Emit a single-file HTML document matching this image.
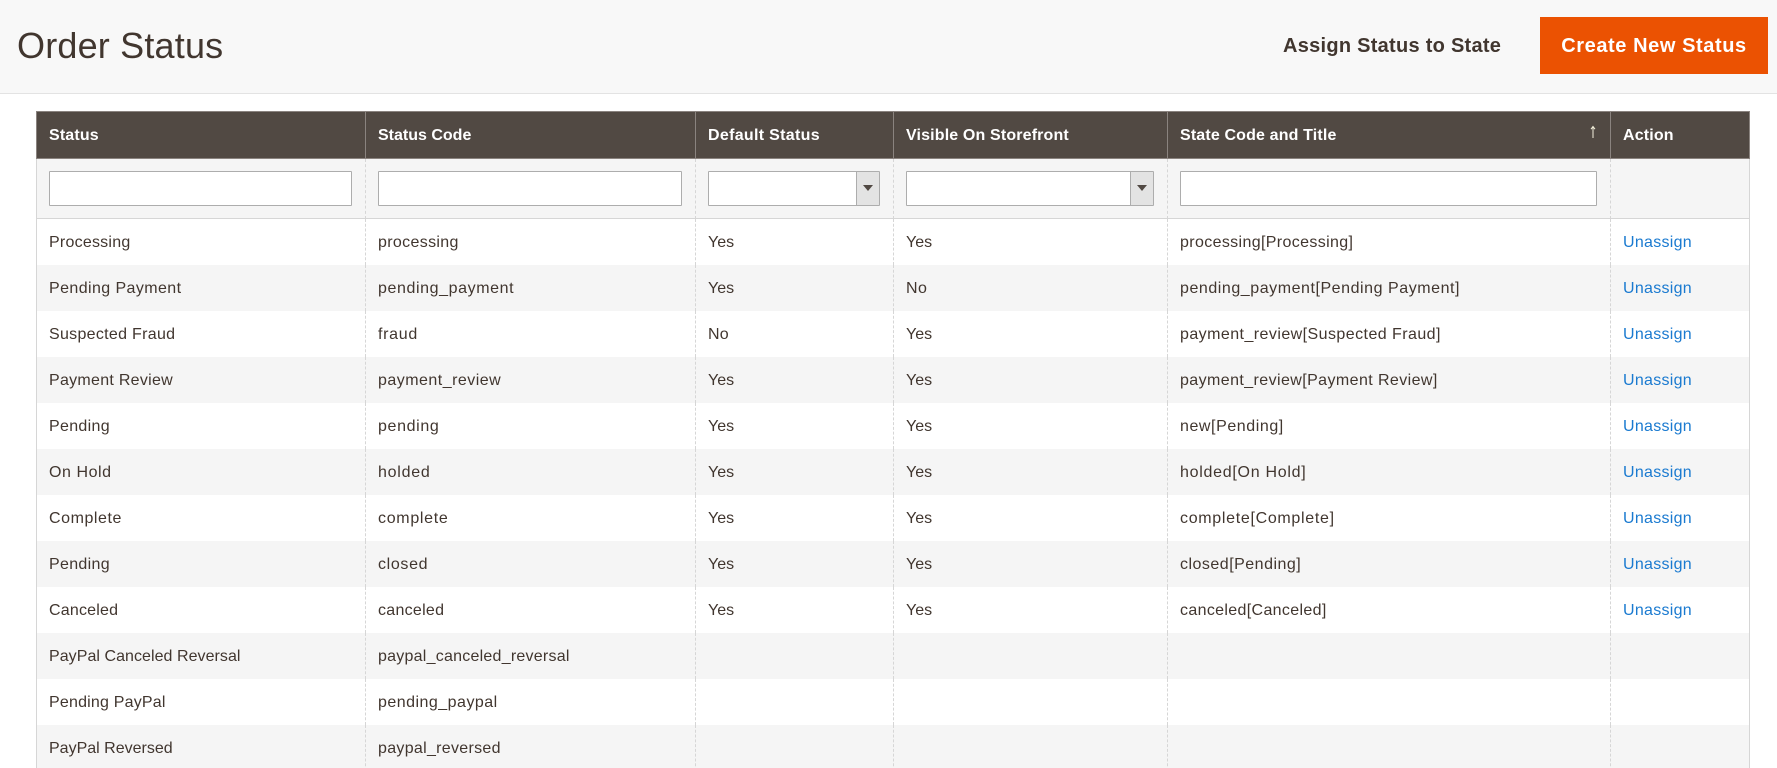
<!DOCTYPE html>
<html lang="en">
<head>
<meta charset="utf-8">
<title>Order Status</title>
<style>
html,body{margin:0;padding:0;width:1777px;height:768px;overflow:hidden;background:#fff}
body{position:relative;font-family:"Liberation Sans",sans-serif;color:#41362f;font-size:16px}
.top{position:absolute;left:0;top:0;width:1777px;height:93px;background:#f8f8f8;border-bottom:1px solid #e3e3e3}
h1{position:absolute;left:17px;top:24px;margin:0;font-size:36px;line-height:44px;font-weight:400;letter-spacing:.19px;color:#41362f}
.assign{position:absolute;left:1283px;top:33px;font-size:20px;line-height:26px;font-weight:700;letter-spacing:.27px;color:#41362f;text-decoration:none;white-space:nowrap}
.create{position:absolute;left:1540px;top:17px;width:228px;height:57px;line-height:58px;background:#eb5202;color:#fff;font-size:20px;font-weight:700;letter-spacing:.58px;text-align:center;white-space:nowrap;overflow:hidden}
table{position:absolute;left:36px;top:111px;width:1714px;table-layout:fixed;border-collapse:separate;border-spacing:0}
th,td{box-sizing:border-box;padding:0 0 0 12px;text-align:left;white-space:nowrap;overflow:hidden;position:relative}
th{height:48px;background:#514943;color:#fff;font-weight:700;letter-spacing:.15px;border-top:1px solid #8a837f;border-bottom:1px solid #8a837f;border-right:1px solid #8a837f;line-height:42px;padding-top:3px;padding-bottom:1px}
th:first-child{border-left:1px solid #8a837f}
td{border-right:1px dashed #d6d6d6;height:46px;line-height:45px;padding-top:1px}
td:first-child{border-left:1px solid #d6d6d6}
td:last-child{border-right:1px solid #d6d6d6}
tr.f td{height:60px;padding-top:0;line-height:20px;background:#f5f5f5;border-bottom:1px solid #d6d6d6}
tr.o td{background:#f5f5f5}
.i{position:absolute;top:12px;height:35px;box-sizing:border-box;background:#fff;border:1px solid #adadad;border-radius:1px;margin:0;padding:0}
.s{position:absolute;right:0;top:0;width:23px;height:33px;background:#e3e3e3;border-left:1px solid #adadad;box-sizing:border-box}
.s:after{content:"";position:absolute;left:6px;top:13px;border-left:5px solid transparent;border-right:5px solid transparent;border-top:6px solid #514943}
a.u{color:#1a7ad0;text-decoration:none;letter-spacing:.28px}
svg.arr{position:absolute;left:1588px;top:124px}
</style>
</head>
<body>
<div class="top">
<h1>Order Status</h1>
<a class="assign" href="#">Assign Status to State</a>
<div class="create">Create New Status</div>
</div>
<table>
<colgroup><col style="width:330px"><col style="width:330px"><col style="width:198px"><col style="width:274px"><col style="width:443px"><col style="width:139px"></colgroup>
<thead>
<tr><th>Status</th><th style="letter-spacing:0">Status Code</th><th style="letter-spacing:.31px">Default Status</th><th>Visible On Storefront</th><th>State Code and Title</th><th>Action</th></tr>
</thead>
<tbody>
<tr class="f">
<td><div class="i" style="left:12px;width:303px"></div></td>
<td><div class="i" style="left:12px;width:304px"></div></td>
<td><div class="i" style="left:12px;width:172px"><div class="s"></div></div></td>
<td><div class="i" style="left:12px;width:248px"><div class="s"></div></div></td>
<td><div class="i" style="left:12px;width:417px"></div></td>
<td></td>
</tr>
<tr><td style="letter-spacing:.23px">Processing</td><td style="letter-spacing:.34px">processing</td><td>Yes</td><td>Yes</td><td style="letter-spacing:.36px">processing[Processing]</td><td><a class="u" href="#">Unassign</a></td></tr>
<tr class="o"><td style="letter-spacing:.41px">Pending Payment</td><td style="letter-spacing:.6px">pending_payment</td><td>Yes</td><td style="letter-spacing:.4px">No</td><td style="letter-spacing:.55px">pending_payment[Pending Payment]</td><td><a class="u" href="#">Unassign</a></td></tr>
<tr><td style="letter-spacing:.3px">Suspected Fraud</td><td style="letter-spacing:.7px">fraud</td><td style="letter-spacing:.2px">No</td><td>Yes</td><td style="letter-spacing:.44px">payment_review[Suspected Fraud]</td><td><a class="u" href="#">Unassign</a></td></tr>
<tr class="o"><td style="letter-spacing:.28px">Payment Review</td><td style="letter-spacing:.48px">payment_review</td><td>Yes</td><td>Yes</td><td style="letter-spacing:.41px">payment_review[Payment Review]</td><td><a class="u" href="#">Unassign</a></td></tr>
<tr><td style="letter-spacing:.32px">Pending</td><td style="letter-spacing:.64px">pending</td><td>Yes</td><td>Yes</td><td style="letter-spacing:.57px">new[Pending]</td><td><a class="u" href="#">Unassign</a></td></tr>
<tr class="o"><td style="letter-spacing:.56px">On Hold</td><td style="letter-spacing:.75px">holded</td><td>Yes</td><td>Yes</td><td style="letter-spacing:.72px">holded[On Hold]</td><td><a class="u" href="#">Unassign</a></td></tr>
<tr><td style="letter-spacing:.56px">Complete</td><td style="letter-spacing:.7px">complete</td><td>Yes</td><td>Yes</td><td style="letter-spacing:.69px">complete[Complete]</td><td><a class="u" href="#">Unassign</a></td></tr>
<tr class="o"><td style="letter-spacing:.32px">Pending</td><td style="letter-spacing:.66px">closed</td><td>Yes</td><td>Yes</td><td style="letter-spacing:.49px">closed[Pending]</td><td><a class="u" href="#">Unassign</a></td></tr>
<tr><td style="letter-spacing:.2px">Canceled</td><td style="letter-spacing:.28px">canceled</td><td>Yes</td><td>Yes</td><td style="letter-spacing:.34px">canceled[Canceled]</td><td><a class="u" href="#">Unassign</a></td></tr>
<tr class="o"><td style="letter-spacing:.05px">PayPal Canceled Reversal</td><td style="letter-spacing:.24px">paypal_canceled_reversal</td><td></td><td></td><td></td><td></td></tr>
<tr><td style="letter-spacing:.2px">Pending PayPal</td><td style="letter-spacing:.48px">pending_paypal</td><td></td><td></td><td></td><td></td></tr>
<tr class="o"><td>PayPal Reversed</td><td style="letter-spacing:.3px">paypal_reversed</td><td></td><td></td><td></td><td></td></tr>
</tbody>
</table>
<svg class="arr" width="10" height="16" viewBox="0 0 10 16"><path d="M5 2.5V14M3 5.2 5 2.5 7 5.2" fill="none" stroke="#f4f0dc" stroke-width="1"/></svg>
</body>
</html>
